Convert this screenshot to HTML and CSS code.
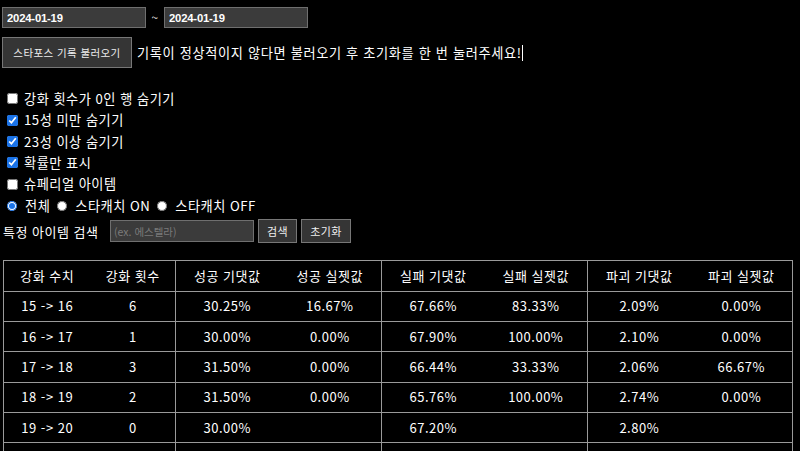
FILE: index.html
```html
<!DOCTYPE html>
<html lang="ko">
<head>
<meta charset="utf-8">
<title>스타포스 기록</title>
<link rel="stylesheet" href="styles.css">
</head>
<body>
<div class="dates">
  <input class="date" type="text" value="2024-01-19">
  <span class="tilde">~</span>
  <input class="date" type="text" value="2024-01-19">
</div>
<div class="loadrow">
  <button class="btn load">스타포스 기록 불러오기</button>
  <span class="notice">기록이 정상적이지 않다면 불러오기 후 초기화를 한 번 눌러주세요!<span class="caret"></span></span>
</div>
<div class="opts">
  <label class="opt"><input type="checkbox">강화 횟수가 0인 행 숨기기</label>
  <label class="opt"><input type="checkbox" checked>15성 미만 숨기기</label>
  <label class="opt"><input type="checkbox" checked>23성 이상 숨기기</label>
  <label class="opt"><input type="checkbox" checked>확률만 표시</label>
  <label class="opt"><input type="checkbox">슈페리얼 아이템</label>
  <div class="radios">
    <label class="ropt"><input type="radio" name="sc" checked>전체</label>
    <label class="ropt"><input type="radio" name="sc">스타캐치 ON</label>
    <label class="ropt"><input type="radio" name="sc">스타캐치 OFF</label>
  </div>
</div>
<div class="search">
  <span class="slabel">특정 아이템 검색</span>
  <input class="sinput" type="text" placeholder="(ex. 에스텔라)">
  <button class="btn sbtn">검색</button>
  <button class="btn rbtn">초기화</button>
</div>
<table class="stats">
  <colgroup>
    <col class="c1"><col class="c2"><col class="c3"><col class="c3"><col class="c3"><col class="c3"><col class="c3"><col class="c8">
  </colgroup>
  <thead>
    <tr><th>강화 수치</th><th>강화 횟수</th><th class="g">성공 기댓값</th><th>성공 실젯값</th><th class="g">실패 기댓값</th><th>실패 실젯값</th><th class="g">파괴 기댓값</th><th>파괴 실젯값</th></tr>
  </thead>
  <tbody>
    <tr><td>15 -&gt; 16</td><td>6</td><td class="g">30.25%</td><td>16.67%</td><td class="g">67.66%</td><td>83.33%</td><td class="g">2.09%</td><td>0.00%</td></tr>
    <tr><td>16 -&gt; 17</td><td>1</td><td class="g">30.00%</td><td>0.00%</td><td class="g">67.90%</td><td>100.00%</td><td class="g">2.10%</td><td>0.00%</td></tr>
    <tr><td>17 -&gt; 18</td><td>3</td><td class="g">31.50%</td><td>0.00%</td><td class="g">66.44%</td><td>33.33%</td><td class="g">2.06%</td><td>66.67%</td></tr>
    <tr><td>18 -&gt; 19</td><td>2</td><td class="g">31.50%</td><td>0.00%</td><td class="g">65.76%</td><td>100.00%</td><td class="g">2.74%</td><td>0.00%</td></tr>
    <tr><td>19 -&gt; 20</td><td>0</td><td class="g">30.00%</td><td></td><td class="g">67.20%</td><td></td><td class="g">2.80%</td><td></td></tr>
    <tr><td></td><td></td><td class="g"></td><td></td><td class="g"></td><td></td><td class="g"></td><td></td></tr>
  </tbody>
</table>
</body>
</html>
```

FILE: styles.css
```css
html, body {
  margin: 0;
  background: #000;
}
body {
  padding: 7px 0 0 2px;
  color: #fff;
  font-family: "Noto Sans CJK KR", "Noto Sans", sans-serif;
  font-size: 13px;
  line-height: 1.2;
  letter-spacing: 0.5px;
}
.dates {
  display: flex;
  align-items: center;
  height: 21px;
}
.date {
  box-sizing: border-box;
  width: 144px;
  height: 21px;
  margin: 0;
  padding: 0 4px;
  background: #3b3b3b;
  border: 1px solid #6f6f6f;
  color: #fff;
  font-family: "Liberation Sans", sans-serif;
  font-weight: bold;
  font-size: 11.3px;
  letter-spacing: -0.2px;
  outline: none;
}
.tilde {
  width: 18px;
  text-align: center;
  font-size: 12px;
  color: #ddd;
}
.loadrow {
  display: flex;
  align-items: center;
  margin-top: 9px;
  height: 31px;
}
.btn {
  box-sizing: border-box;
  margin: 0;
  padding: 0;
  background: #353535;
  border: 1px solid #777;
  color: #eee;
  font-family: "Noto Sans CJK KR", sans-serif;
  font-size: 10.5px;
  letter-spacing: 0.4px;
  border-radius: 0;
}
.load {
  width: 130px;
  height: 31px;
}
.notice {
  margin-left: 5px;
  font-size: 13.2px;
  letter-spacing: 0.65px;
  display: flex;
  align-items: center;
}
.caret {
  display: inline-block;
  width: 1px;
  height: 16px;
  background: #fff;
  margin-left: 0;
}
.opts {
  margin-top: 20px;
}
.opt, .ropt {
  display: flex;
  align-items: center;
  height: 21.4px;
  font-size: 13.2px;
}
.opt input {
  width: 11px;
  height: 11px;
  margin: 0 6px 0 5px;
  accent-color: #1a73e8;
}
.radios {
  display: flex;
  align-items: center;
  height: 21.4px;
}
.ropt input {
  width: 10px;
  height: 10px;
  margin: 0 8px 0 5px;
  accent-color: #1a73e8;
}
.ropt + .ropt input {
  margin-left: 7px;
}
.search {
  display: flex;
  align-items: center;
  height: 24px;
  margin-top: 3px;
}
.slabel {
  margin-left: 1px;
  font-size: 13px;
  width: 107px;
}
.sinput {
  box-sizing: border-box;
  width: 144px;
  height: 22px;
  margin: 0;
  padding: 0 3px;
  background: #3b3b3b;
  border: 1px solid #6f6f6f;
  color: #fff;
  font-family: "Noto Sans CJK KR", sans-serif;
  font-size: 10.5px;
  outline: none;
}
.sinput::placeholder {
  color: #7a7a7a;
}
.sbtn {
  width: 39px;
  height: 24px;
  margin-left: 4px;
  font-size: 11px;
}
.rbtn {
  width: 50px;
  height: 24px;
  margin-left: 4px;
  font-size: 11px;
}
.stats {
  margin: 17px 0 0 1px;
  width: 790px;
  table-layout: fixed;
  border-collapse: collapse;
  border: 1px solid #9a9a9a;
  font-size: 13px;
}
.c1 { width: 87px; }
.c2 { width: 85px; }
.c3 { width: 103px; }
.c8 { width: 102px; }
.stats th, .stats td {
  height: 29.3px;
  padding: 0;
  text-align: center;
  font-weight: normal;
  border-bottom: 1px solid #9a9a9a;
  white-space: nowrap;
}
.stats .g {
  border-left: 1px solid #9a9a9a;
}
```
